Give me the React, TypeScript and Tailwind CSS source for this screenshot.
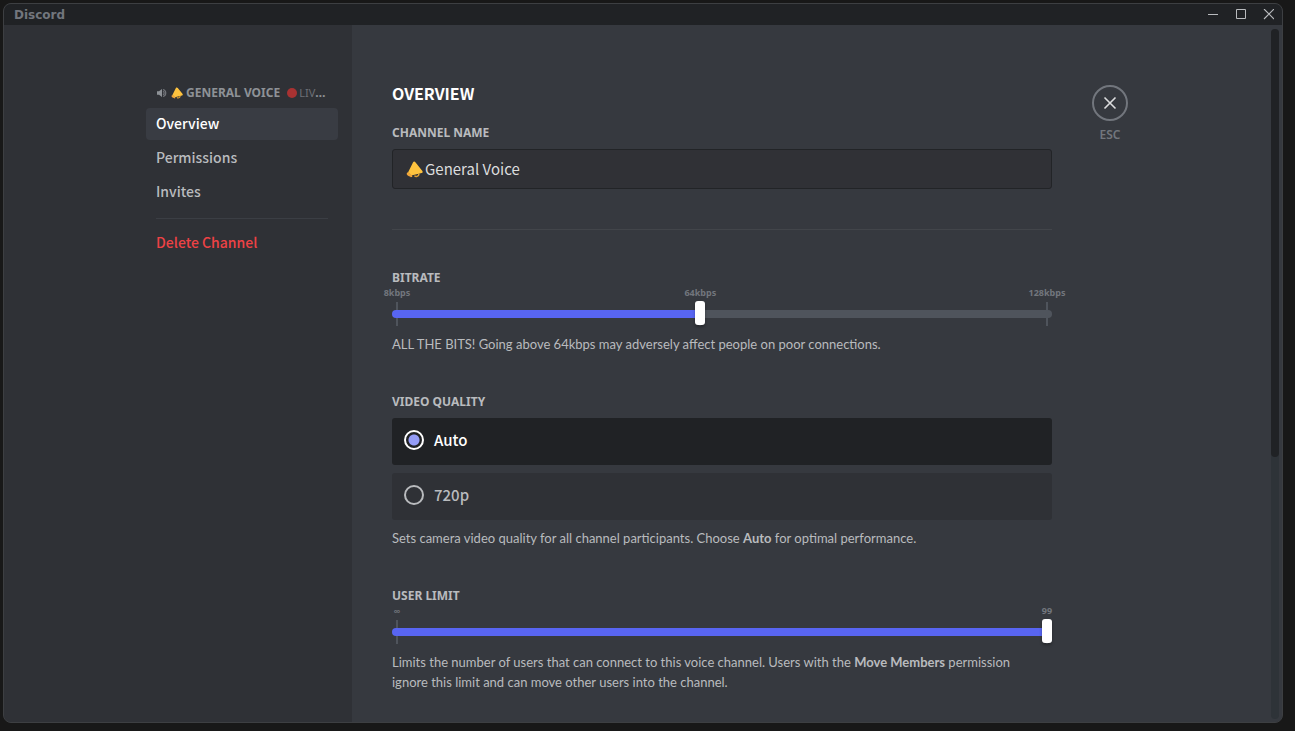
import { useState, type CSSProperties, type ReactNode } from 'react';

function Megaphone({ className }: { className: string }) {
  return (
    <svg viewBox="0 0 17 17" className={className} aria-hidden="true">
      <path d="M8.500 14.600c1.200 1.500 4.300 1.200 4.500-2" fill="none" stroke="#e0a030" strokeWidth="1.500" />
      <path d="M7.100 1.200c.7-.9 1.700-.7 2.500.2l6.600 8.300c.8 1 .6 2-.5 2.300L5.400 14.600 2 11.400z" fill="#fdc23e" />
      <path d="M2.100 11.200c-1.200.4-1.700 1.200-1.200 2.300.6 1.200 2.200 2.200 3.400 1.900l1.600-1.200z" fill="#f2a73b" />
      <path d="M3.400 14.600l1.400 1.700 1.600-.6-.8-1.700z" fill="#f2a73b" />
    </svg>
  );
}

function Speaker() {
  return (
    <svg viewBox="0 0 12 12" className="size-3 shrink-0 text-[#8e9297]" aria-hidden="true">
      <path d="M1 4.200h2L6 2v8L3 7.800h-2z" fill="currentColor" />
      <path d="M7 4.200a2 2 0 0 1 0 3.600M7 2.500a3.600 3.600 0 0 1 0 7" fill="none" stroke="currentColor" strokeWidth="1.200" opacity=".7" />
    </svg>
  );
}

function TitleBar() {
  const button = 'flex h-full w-7 items-center justify-center text-[#b9bbbe]';
  return (
    <header className="flex h-[21px] shrink-0 items-center justify-between bg-[#202225]">
      <span className="pl-[10px] font-['DejaVu_Sans',sans-serif] text-xs leading-none font-bold text-[#72767d]">Discord</span>
      <div className="flex h-full">
        <button type="button" aria-label="Minimize" className={button}>
          <svg viewBox="0 0 12 12" className="size-3" fill="currentColor"><path d="M2 5h10v1H2z" /></svg>
        </button>
        <button type="button" aria-label="Maximize" className={button}>
          <svg viewBox="0 0 12 12" className="size-3" fill="none" stroke="currentColor"><path d="M2.500 .500h9v9h-9z" /></svg>
        </button>
        <button type="button" aria-label="Close" className={button}>
          <svg viewBox="0 0 12 12" className="size-3" fill="none" stroke="currentColor" strokeWidth="1.100"><path d="M2 0l10 10M12 0L2 10" /></svg>
        </button>
      </div>
    </header>
  );
}

function Sidebar() {
  const item = 'flex h-8 items-center rounded px-[10px] pb-[2px] text-sm font-medium';
  return (
    <nav className="flex flex-[1_0_218px] justify-end bg-[#2f3136] pt-[60px] pr-[14px]">
      <div className="flex w-48 flex-col">
        <div className="mb-[7px] flex h-4 items-center px-[10px] font-['Noto_Sans',sans-serif] text-xs font-bold text-[#8e9297]">
          <Speaker />
          <Megaphone className="ml-[3px] size-3 shrink-0" />
          <span className="ml-[3px] whitespace-nowrap">GENERAL VOICE</span>
          <span className="ml-[7px] size-[10px] shrink-0 rounded-full bg-[#a83232]" />
          <span className="ml-[2px] truncate"><span className="text-[11px] font-normal text-[#6d7076]">LIV</span>…</span>
        </div>
        <div className="flex flex-col gap-[2px]">
          <a href="#overview" aria-current="page" className={item + ' bg-[#393c43] text-white'}>Overview</a>
          <a href="#permissions" className={item + ' text-[#b9bbbe]'}>Permissions</a>
          <a href="#invites" className={item + ' text-[#b9bbbe]'}>Invites</a>
        </div>
        <hr className="mx-[10px] mt-[10px] mb-2 border-[#3b3e44]" />
        <button type="button" className={item + ' text-[#ed4245]'}>Delete Channel</button>
      </div>
    </nav>
  );
}

const labelClass = "block font-['Noto_Sans',sans-serif] text-xs leading-4 font-bold text-[#b9bbbe]";
const noteClass = 'mt-2 max-w-[640px] font-[Lato,sans-serif] text-[13px] leading-5 text-[#b9bbbe]';

type SliderProps = {
  id: string;
  min: number;
  max: number;
  start: number;
  marks: { value: number; text: string }[];
};

function Slider({ id, min, max, start, marks }: SliderProps) {
  const [value, setValue] = useState(start);
  const share = (v: number) => (v - min) / (max - min);
  return (
    <div className="relative h-10 pt-4">
      <div className="absolute inset-x-[5px] inset-y-0">
        {marks.map((m) => (
          <div key={m.value} className="absolute inset-y-0 flex w-0 flex-col items-center" style={{ left: `${share(m.value) * 100}%` }}>
            <span className="h-4 font-['Noto_Sans',sans-serif] text-[9px] leading-[14px] font-bold whitespace-nowrap text-[#72767d]">{m.text}</span>
            <span className="h-6 w-[2px] bg-[#4f545c]" />
          </div>
        ))}
      </div>
      <input
        id={id}
        type="range"
        min={min}
        max={max}
        value={value}
        onChange={(e) => setValue(Number(e.target.value))}
        style={{ '--fill': `${share(value) * 100}%` } as CSSProperties}
        className="relative block h-6 w-full appearance-none bg-transparent [&::-webkit-slider-runnable-track]:h-2 [&::-webkit-slider-runnable-track]:rounded-full [&::-webkit-slider-runnable-track]:bg-[linear-gradient(to_right,#5865f2_var(--fill),#4f545c_var(--fill))] [&::-webkit-slider-thumb]:-mt-[9px] [&::-webkit-slider-thumb]:h-6 [&::-webkit-slider-thumb]:w-[10px] [&::-webkit-slider-thumb]:appearance-none [&::-webkit-slider-thumb]:rounded-[3px] [&::-webkit-slider-thumb]:bg-white [&::-webkit-slider-thumb]:shadow-[0_2px_3px_rgba(0,0,0,0.3)]"
      />
    </div>
  );
}

function Section({ className, children }: { className: string; children: ReactNode }) {
  return <section className={className}>{children}</section>;
}

function QualityOption({ name, checked, onPick }: { name: string; checked: boolean; onPick: () => void }) {
  return (
    <label className={checked ? 'flex h-[47px] items-center rounded-[3px] bg-[#202225] px-3 pb-[3px] text-white' : 'flex h-[47px] items-center rounded-[3px] bg-[#2f3136] px-3 pb-[3px] text-[#b9bbbe]'}>
      <input
        type="radio"
        name="quality"
        checked={checked}
        onChange={onPick}
        className="size-5 appearance-none rounded-full border-2 border-current checked:bg-[radial-gradient(circle,#949cf7_5px,transparent_6px)]"
      />
      <span className="ml-[10px] text-[15px] font-medium">{name}</span>
    </label>
  );
}

export default function App() {
  const [name, setName] = useState('General Voice');
  const [quality, setQuality] = useState('Auto');
  return (
    <div className="h-screen bg-[#181818] pt-[3px] pr-3 pb-2 pl-[3px] font-['Noto_Sans_CJK_SC',sans-serif]">
      <div className="flex h-full flex-col overflow-hidden rounded-lg border border-[#3d3f42] bg-[#36393f]">
        <TitleBar />
        <div className="flex min-h-0 flex-1">
          <Sidebar />
          <div className="flex min-w-0 flex-[1_1_800px] bg-[#36393f]">
            <main className="w-full max-w-[740px] px-10 pt-[58px]">
              <h1 className="text-base leading-5 font-bold text-white">OVERVIEW</h1>
              <Section className="mt-[22px]">
                <label htmlFor="channel-name" className={labelClass}>CHANNEL NAME</label>
                <div className="mt-2 flex h-10 items-center rounded-[3px] border border-[#222427] bg-[#303136] pl-[13px]">
                  <Megaphone className="size-[17px] shrink-0" />
                  <input
                    id="channel-name"
                    value={name}
                    onChange={(e) => setName(e.target.value)}
                    className="ml-[2px] min-w-0 flex-1 bg-transparent text-[15px] text-[#dcddde] outline-none"
                  />
                </div>
              </Section>
              <hr className="my-10 border-[#42454a]" />
              <Section className="">
                <label htmlFor="bitrate" className={labelClass}>BITRATE</label>
                <Slider id="bitrate" min={8} max={128} start={64} marks={[{ value: 8, text: '8kbps' }, { value: 64, text: '64kbps' }, { value: 128, text: '128kbps' }]} />
                <p className={noteClass}>ALL THE BITS! Going above 64kbps may adversely affect people on poor connections.</p>
              </Section>
              <Section className="mt-10">
                <h2 className={labelClass}>VIDEO QUALITY</h2>
                <div className="mt-2 flex flex-col gap-2">
                  <QualityOption name="Auto" checked={quality === 'Auto'} onPick={() => setQuality('Auto')} />
                  <QualityOption name="720p" checked={quality === '720p'} onPick={() => setQuality('720p')} />
                </div>
                <p className={noteClass}>Sets camera video quality for all channel participants. Choose <strong>Auto</strong> for optimal performance.</p>
              </Section>
              <Section className="mt-10">
                <label htmlFor="user-limit" className={labelClass}>USER LIMIT</label>
                <Slider id="user-limit" min={0} max={99} start={99} marks={[{ value: 0, text: '∞' }, { value: 99, text: '99' }]} />
                <p className={noteClass}>Limits the number of users that can connect to this voice channel. Users with the <strong>Move Members</strong> permission ignore this limit and can move other users into the channel.</p>
              </Section>
            </main>
            <div className="shrink-0 pt-[60px]">
              <button type="button" className="flex flex-col items-center gap-[6px] font-['Noto_Sans',sans-serif] text-xs leading-4 font-semibold text-[#72767d]">
                <span className="flex size-9 items-center justify-center rounded-full border-2 border-[#72767d] text-[#dcddde]">
                  <svg viewBox="0 0 14 14" className="size-[14px]" fill="none" stroke="currentColor" strokeWidth="1.600" aria-hidden="true"><path d="M1.500 1.500l11 11M12.500 1.500l-11 11" /></svg>
                </span>
                ESC
              </button>
            </div>
            <div className="mt-1 mr-[3px] mb-[3px] ml-auto w-2 shrink-0 rounded-full bg-[#2e3338]">
              <div className="h-[62%] rounded-full bg-[#202225]" />
            </div>
          </div>
        </div>
      </div>
    </div>
  );
}
